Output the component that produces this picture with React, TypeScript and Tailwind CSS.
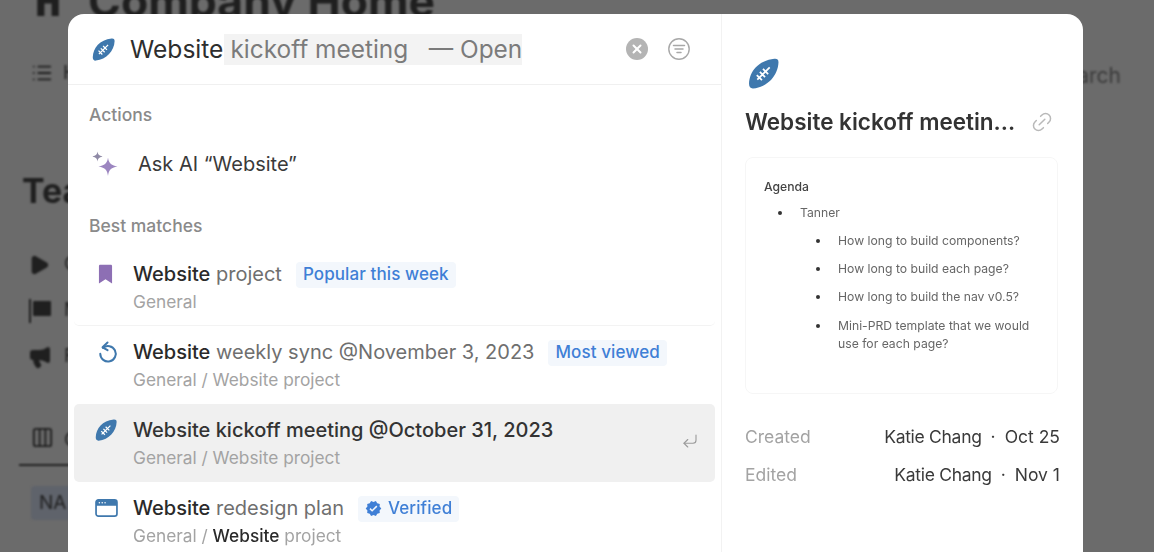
import { CornerDownLeft, Link2, List, Columns3, Megaphone, Play, X } from 'lucide-react'
import { MdVerified } from 'react-icons/md'
import type { ReactNode } from 'react'

const FONT = 'font-["Inter","Noto_Sans",sans-serif]'

function Football({ size }: { size: number }) {
  return (
    <svg width={size} height={size} viewBox="0 0 30 30" className="shrink-0">
      <path d="M1 25 C1.5 13 10 2.5 25.5 0.8 C28 0.5 29.5 1.5 29.5 4 C29 17 19 28 5 29.5 C2.5 29.7 1 28 1 25 Z" fill="#3f78ad" />
      <path d="M9 21 L21 9 M8.5 16.5 L13.5 21.5 M11.5 13.5 L16.5 18.5 M14.5 10.5 L19.5 15.5" stroke="#fff" strokeWidth="1.7" fill="none" />
    </svg>
  )
}

function Sparkles() {
  return (
    <svg width="26" height="26" viewBox="0 0 26 26" className="shrink-0">
      <path d="M16 6.5 C16.8 12 18.5 14 25.5 15.5 C18.5 17 16.8 19 16 25 C15.2 19 13.5 17 6.5 15.5 C13.5 14 15.2 12 16 6.5 Z" fill="#9c86c0" />
      <path d="M5.5 0.5 C6 3.5 7 4.5 10.5 5.5 C7 6.5 6 7.5 5.5 10.5 C5 7.5 4 6.5 0.5 5.5 C4 4.5 5 3.5 5.5 0.5 Z" fill="#8f8aa6" />
    </svg>
  )
}

function BookmarkIcon() {
  return (
    <svg width="15" height="22" viewBox="0 0 16 22" className="shrink-0">
      <path d="M1 2.5 C1 1.5 1.7 1 2.5 1 H13.5 C14.3 1 15 1.5 15 2.5 V21 L8 16.5 L1 21 Z" fill="#8d6fb4" />
    </svg>
  )
}

function ReloadIcon() {
  return (
    <svg width="20" height="24" viewBox="0 0 22 24" fill="none" className="shrink-0">
      <path d="M5.5 7.5 A8.5 8.5 0 1 1 2.5 14" stroke="#3f78ad" strokeWidth="2.2" strokeLinecap="round" />
      <path d="M10.5 1.5 L5 6.8 L10.5 10" stroke="#3f78ad" strokeWidth="2.2" strokeLinecap="round" strokeLinejoin="round" />
    </svg>
  )
}

function WindowIcon() {
  return (
    <svg width="23" height="19" viewBox="0 0 24 20" className="shrink-0">
      <rect x="1" y="1" width="22" height="17" rx="2.5" fill="#fff" stroke="#3f78ad" strokeWidth="1.8" />
      <path d="M1 3.5 A2.5 2.5 0 0 1 3.5 1 H20.5 A2.5 2.5 0 0 1 23 3.5 V7 H1 Z" fill="#3f78ad" />
      <circle cx="4.5" cy="4" r="0.8" fill="#fff" />
      <circle cx="7.5" cy="4" r="0.8" fill="#fff" />
      <circle cx="10.5" cy="4" r="0.8" fill="#fff" />
    </svg>
  )
}

function FilterIcon() {
  return (
    <svg width="24" height="24" viewBox="0 0 24 24" fill="none" stroke="#a8a8a8" className="shrink-0">
      <circle cx="12" cy="12" r="10.2" strokeWidth="1.4" />
      <path d="M6.5 8.5 H17.5 M8 12 H16 M10 15.5 H14" strokeWidth="1.5" strokeLinecap="round" />
    </svg>
  )
}

function FlagIcon() {
  return (
    <svg width="24" height="26" viewBox="0 0 24 26" fill="currentColor" className="shrink-0">
      <rect x="1" y="1" width="2" height="24" />
      <rect x="5" y="3" width="18" height="15" rx="1" />
    </svg>
  )
}

function HomeIcon() {
  return (
    <svg width="30" height="34" viewBox="0 0 32 38" fill="currentColor" className="mb-[4px] shrink-0">
      <path d="M16 1 L31 14 H28 V38 H20 V24 H12 V38 H4 V14 H1 Z" />
    </svg>
  )
}

function Chip({ children }: { children: ReactNode }) {
  return (
    <span className="mt-[1px] flex h-[26px] items-center gap-[6px] rounded-[4px] bg-[#f3f7fc] px-[7px] text-[17px] font-medium tracking-[0.1px] text-[#3f7fd6]">
      {children}
    </span>
  )
}

interface ResultRowProps {
  icon: ReactNode
  title: ReactNode
  sub: ReactNode
  chip?: ReactNode
  active?: boolean
  divider?: boolean
}

function ResultRow({ icon, title, sub, chip, active, divider }: ResultRowProps) {
  return (
    <div className={`flex h-[78px] items-start rounded-[5px] px-[16px] pt-[13px] ${active ? 'bg-[#f0f0f0]' : ''} ${divider ? 'border-b border-[#f3f3f3]' : ''}`}>
      <div className="flex h-[26px] w-[43px] shrink-0 items-center pl-[5px]">{icon}</div>
      <div className="min-w-0 flex-1">
        <div className="flex h-[26px] items-center gap-[14px]">
          <span className="whitespace-nowrap text-[20px] text-[#6f6f6f]">{title}</span>
          {chip}
        </div>
        <div className="mt-[2px] whitespace-nowrap text-[17.3px] leading-[26px] text-[#a3a3a3]">{sub}</div>
      </div>
      {active && <CornerDownLeft size={18} strokeWidth={1.5} className="mt-[15px] text-[#9b9b9b]" />}
    </div>
  )
}

const Hit = ({ children }: { children: ReactNode }) => <span className="font-medium text-[#2a2a2a]">{children}</span>

function Bullet({ left, children }: { left: string; children: ReactNode }) {
  return (
    <div className={`flex leading-[18px] ${left}`}>
      <span className="mt-[7px] h-[4px] w-[4px] shrink-0 rounded-full bg-[#333]" />
      <span className="ml-[18px]">{children}</span>
    </div>
  )
}

function BackgroundPage() {
  return (
    <div className="h-full pl-[19px] text-[#1f1f1f] blur-[0.8px]">
      <div className="-mt-[24px] flex h-[50px] items-center gap-[25px] pl-[14px]">
        <HomeIcon />
        <span className="whitespace-nowrap text-[44.5px] font-bold">Company Home</span>
      </div>
      <div className="mt-[33px] flex items-center gap-[10px] pl-[12px] text-[19px]">
        <List size={22} />
        <span>H</span>
      </div>
      <div className="mt-[77px] pl-[3px] text-[34px] font-bold">Team</div>
      <div className="mt-[36px] flex flex-col gap-[20px] pl-[9px] text-[19px]">
        <div className="flex h-[26px] items-center gap-[14px]"><Play size={22} fill="currentColor" /><span>C</span></div>
        <div className="flex h-[26px] items-center gap-[12px]"><FlagIcon /><span>M</span></div>
        <div className="flex h-[26px] items-center gap-[12px]"><Megaphone size={24} fill="currentColor" /><span>F</span></div>
      </div>
      <div className="mt-[56px] flex h-[40px] w-[60px] items-start gap-[10px] border-b-2 border-[#222] pl-[12px] text-[19px]">
        <Columns3 size={23} /><span>C</span>
      </div>
      <div className="ml-[12px] mt-[20px] w-[50px] rounded-[4px] bg-[#5f636b] px-[8px] py-[3px] text-[19px]">NA</div>
    </div>
  )
}

export default function App() {
  return (
    <div className={`relative h-[552px] w-full overflow-hidden bg-[#6b6b6b] ${FONT}`}>
      <BackgroundPage />
      <div className="absolute right-[33px] top-[60px] text-[21px] text-[#3a3a3a] blur-[0.8px]">arch</div>

      <div className="absolute left-[68px] top-[14px] flex h-[560px] w-[1015px] overflow-hidden rounded-[16px] bg-white blur-[0.35px]">
        <div className="w-[654px] shrink-0 border-r border-[#f2f2f2]">
          <div className="flex h-[71px] items-center border-b border-[#f0f0f0] pl-[24px] pr-[30px]">
            <Football size={23} />
            <span className="ml-[15px] text-[24.6px] text-[#2e2e2e]">Website</span>
            <span className="ml-[1px] flex h-[31px] items-center whitespace-pre bg-[#f3f3f3] pl-[6px] text-[24.4px] text-[#7b7b7b]">kickoff meeting   — Open</span>
            <div className="ml-auto flex items-center gap-[19px]">
              <span className="flex h-[22px] w-[22px] items-center justify-center rounded-full bg-[#b4b4b4]">
                <X size={14} strokeWidth={3.4} className="text-white" />
              </span>
              <FilterIcon />
            </div>
          </div>

          <div className="pl-[21px] pt-[18px] text-[17.5px] font-medium leading-[24px] text-[#8a8a8a]">Actions</div>
          <div className="mt-[19px] flex h-[36px] items-center pl-[24px]">
            <Sparkles />
            <span className="ml-[20px] text-[20px] text-[#3a3a3a]">Ask AI “Website”</span>
          </div>
          <div className="pl-[21px] pt-[32px] text-[17.5px] font-medium leading-[24px] text-[#8a8a8a]">Best matches</div>

          <div className="mt-[10px] flex flex-col px-[6px]">
            <ResultRow
              divider
              icon={<span className="pl-[3px]"><BookmarkIcon /></span>}
              title={<><Hit>Website</Hit> project</>}
              sub="General"
              chip={<Chip>Popular this week</Chip>}
            />
            <ResultRow
              icon={<span className="pl-[3px]"><ReloadIcon /></span>}
              title={<><Hit>Website</Hit> weekly sync @November 3, 2023</>}
              sub="General / Website project"
              chip={<Chip>Most viewed</Chip>}
            />
            <ResultRow
              active
              icon={<Football size={22} />}
              title={<span className="font-medium text-[#333]">Website kickoff meeting @October 31, 2023</span>}
              sub="General / Website project"
            />
            <ResultRow
              icon={<WindowIcon />}
              title={<><Hit>Website</Hit> redesign plan</>}
              sub={<>General / <Hit>Website</Hit> project</>}
              chip={<Chip><MdVerified size={17} className="text-[#3f7fd6]" />Verified</Chip>}
            />
          </div>
        </div>

        <div className="min-w-0 flex-1 pl-[23px] pr-[23px] pt-[44px]">
          <div className="pl-[3px]"><Football size={31} /></div>
          <div className="mt-[16px] flex h-[34px] items-center">
            <span className="whitespace-nowrap text-[22.5px] font-semibold text-[#333]">Website kickoff meetin...</span>
            <Link2 size={24} strokeWidth={1.5} className="ml-[15px] shrink-0 -rotate-45 text-[#b9b9b9]" />
          </div>
          <div className="mt-[18px] h-[237px] w-[313px] rounded-[8px] border border-[#f6f6f6] pl-[18px] pt-[20px] text-[12.2px] text-[#666]">
            <div className="font-medium leading-[18px] text-[#444]">Agenda</div>
            <div className="mt-[8px]"><Bullet left="ml-[14px]">Tanner</Bullet></div>
            <div className="mt-[10px] flex flex-col pr-[22px]">
              <Bullet left="ml-[52px] mb-[10px]">How long to build components?</Bullet>
              <Bullet left="ml-[52px] mb-[10px]">How long to build each page?</Bullet>
              <Bullet left="ml-[52px] mb-[11px]">How long to build the nav v0.5?</Bullet>
              <Bullet left="ml-[52px]">Mini-PRD template that we would use for each page?</Bullet>
            </div>
          </div>
          <div className="mt-[24px] flex h-[38px] w-[315px] items-center justify-between text-[17.5px]">
            <span className="text-[#a3a3a3]">Created</span>
            <span className="flex gap-[9px] text-[#3a3a3a]"><span className="tracking-[-0.3px]">Katie Chang</span><span>·</span><span>Oct 25</span></span>
          </div>
          <div className="flex h-[38px] w-[315px] items-center justify-between text-[17.5px]">
            <span className="text-[#a3a3a3]">Edited</span>
            <span className="flex gap-[9px] text-[#3a3a3a]"><span className="tracking-[-0.3px]">Katie Chang</span><span>·</span><span>Nov 1</span></span>
          </div>
        </div>
      </div>
    </div>
  )
}
